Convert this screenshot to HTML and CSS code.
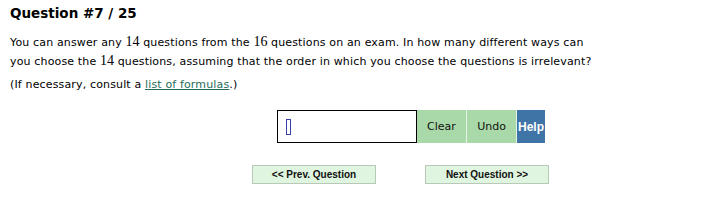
FILE: index.html
```html
<!DOCTYPE html>
<html lang="en">
<head>
    <meta charset="UTF-8">
    <title>Question #7 / 25</title>
    <link rel="stylesheet" href="styles.css">
</head>
<body>
    <h2 class="title">Question #7 / 25</h2>
    <p class="question">
        You can answer any <span class="num">14</span> questions from the <span class="num">16</span> questions on an exam. In how many different ways can<br>
        you choose the <span class="num">14</span> questions, assuming that the order in which you choose the questions is irrelevant?
    </p>
    <p class="hint">(If necessary, consult a <a href="#">list of formulas</a>.)</p>

    <div class="answer-row">
        <div class="answer-box"><span class="cursor"></span></div>
        <button class="btn-green">Clear</button>
        <button class="btn-green">Undo</button>
        <button class="btn-help">Help</button>
    </div>

    <div class="nav-row">
        <button class="btn-nav">&lt;&lt; Prev. Question</button>
        <button class="btn-nav">Next Question &gt;&gt;</button>
    </div>
</body>
</html>
```

FILE: styles.css
```css
body {
    font-family: Verdana, 'DejaVu Sans', sans-serif;
    font-size: 11px;
    color: #000;
    margin: 0;
    padding: 0 10px;
    background: #fff;
}
.title {
    font-size: 13.5px;
    font-weight: bold;
    margin: 3px 0 0;
    line-height: 20px;
}
.question {
    margin: 10px 0 0;
    line-height: 18px;
    letter-spacing: 0.15px;
    white-space: nowrap;
}
.num {
    font-family: 'Liberation Serif', serif;
    font-size: 14px;
    letter-spacing: 0;
}
.hint {
    margin: 5px 0 0;
    line-height: 18px;
    letter-spacing: 0.15px;
}
.hint a {
    color: #276c5a;
}
.answer-row {
    display: flex;
    margin: 16px 0 0 267px;
    height: 33px;
}
.answer-box {
    box-sizing: border-box;
    width: 140px;
    border: 1px solid #000;
    display: flex;
    align-items: center;
    padding-left: 8px;
}
.cursor {
    width: 3px;
    height: 14px;
    border: 1px solid #3a3fb0;
}
.btn-green, .btn-help {
    border: none;
    margin: 0;
    padding: 0;
    font-family: Verdana, 'DejaVu Sans', sans-serif;
    font-size: 11px;
    cursor: pointer;
}
.btn-green {
    width: 50px;
    background: #a9d9a8;
    border-right: 1px solid #e6f2e6;
    color: #111;
}
.btn-help {
    width: 28px;
    background: #3f74a6;
    color: #fff;
    font-family: 'Liberation Sans', Arial, sans-serif;
    font-weight: bold;
    font-size: 12px;
}
.nav-row {
    display: flex;
    gap: 49px;
    margin: 22px 0 0 242px;
}
.btn-nav {
    width: 124px;
    height: 19px;
    background: #e0f5e0;
    border: 1px solid #b9c9b9;
    font-family: 'Liberation Sans', Arial, sans-serif;
    font-weight: bold;
    font-size: 10px;
    color: #111;
    padding: 0;
    cursor: pointer;
}
```
